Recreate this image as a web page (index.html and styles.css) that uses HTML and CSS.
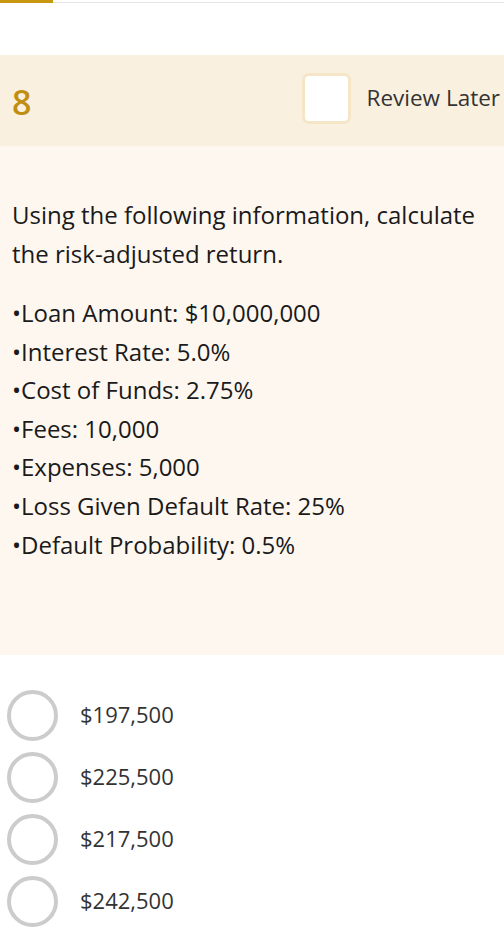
FILE: index.html
```html
<!DOCTYPE html>
<html>
<head>
<meta charset="utf-8">
<link rel="stylesheet" href="styles.css">
</head>
<body>
<div class="topbar"><div class="progress"></div></div>
<div class="spacer"></div>
<div class="header">
  <div class="qnum">8</div>
  <div class="review">
    <div class="checkbox"></div>
    <span class="review-label">Review Later</span>
  </div>
</div>
<div class="question">
  <p class="prompt">Using the following information, calculate the risk-adjusted return.</p>
  <ul class="facts">
    <li>•Loan Amount: $10,000,000</li>
    <li>•Interest Rate: 5.0%</li>
    <li>•Cost of Funds: 2.75%</li>
    <li>•Fees: 10,000</li>
    <li>•Expenses: 5,000</li>
    <li>•Loss Given Default Rate: 25%</li>
    <li>•Default Probability: 0.5%</li>
  </ul>
</div>
<div class="options">
  <div class="option"><span class="radio"></span><span class="opt-text">$197,500</span></div>
  <div class="option"><span class="radio"></span><span class="opt-text">$225,500</span></div>
  <div class="option"><span class="radio"></span><span class="opt-text">$217,500</span></div>
  <div class="option"><span class="radio"></span><span class="opt-text">$242,500</span></div>
</div>
</body>
</html>
```
FILE: styles.css
```css
* { box-sizing: border-box; }
html, body { margin: 0; padding: 0; background: #ffffff; }
body {
  font-family: "Open Sans", "Noto Sans", sans-serif;
  color: #1c1c1c;
  width: 504px;
  overflow: hidden;
}
.topbar {
  height: 3px;
  border-bottom: 1px solid #e6e6e6;
  position: relative;
}
.progress {
  width: 53px;
  height: 3px;
  background: #c8960f;
}
.spacer { height: 52px; }
.header {
  height: 91px;
  background: #faf0df;
  display: flex;
  align-items: center;
  justify-content: space-between;
  padding: 0 4px 0 12px;
}
.qnum {
  font-size: 34px;
  color: #c08e12;
  font-weight: 600;
  line-height: 1;
  margin-top: 2px;
}
.review {
  display: flex;
  align-items: center;
  gap: 16px;
  margin-bottom: 4px;
}
.checkbox {
  width: 49px;
  height: 51px;
  background: #ffffff;
  border: 3px solid #f5e6c8;
  border-radius: 7px;
}
.review-label {
  font-size: 22.5px;
  color: #333333;
  margin-bottom: 3px;
}
.question {
  background: #fdf7f0;
  padding: 49px 12px 84px 12px;
  height: 509px;
}
.prompt {
  margin: 0 0 21px 0;
  font-size: 24px;
  line-height: 39px;
  color: #1a1a1a;
}
.facts {
  list-style: none;
  margin: 0;
  padding: 0;
}
.facts li {
  font-size: 24px;
  line-height: 38.6px;
  color: #1a1a1a;
  white-space: nowrap;
}
.options {
  padding: 35px 0 0 7px;
  display: flex;
  flex-direction: column;
  gap: 11px;
}
.option {
  display: flex;
  align-items: center;
  height: 51px;
}
.radio {
  width: 51px;
  height: 51px;
  border: 4px solid #cccccc;
  border-radius: 50%;
  flex-shrink: 0;
}
.opt-text {
  margin-left: 22px;
  margin-bottom: 3px;
  font-size: 22px;
  color: #333333;
}
```
